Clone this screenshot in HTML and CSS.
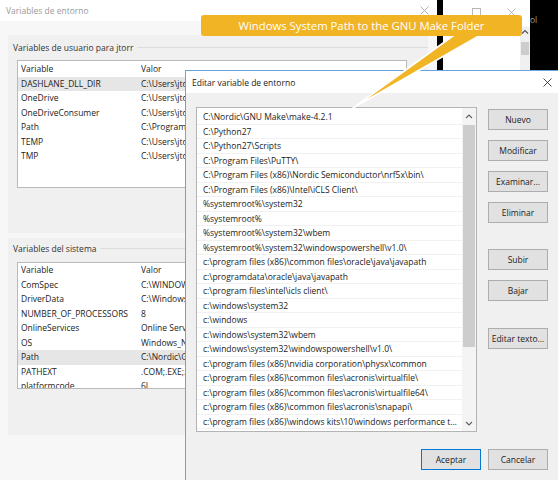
FILE: index.html
```html
<!DOCTYPE html>
<html lang="es">
<head>
<meta charset="utf-8">
<title>Variables de entorno</title>
<link rel="stylesheet" href="styles.css">
</head>
<body>
<div class="desk">

  <div class="bgwin">
    <div class="bg-title">
      <span>Variables de entorno</span>
      <svg class="x-ico" width="9" height="9" viewBox="0 0 9 9"><path d="M0.5 0.5L8.5 8.5M8.5 0.5L0.5 8.5" stroke="#b0b0b0" stroke-width="1" fill="none"/></svg>
    </div>
    <div class="bg-body">
      <section class="panel p1">
        <div class="glabel"><span>Variables de usuario para jtorr</span><i></i></div>
        <div class="vlist vl-user">
          <div class="vrow"><span>Variable</span><span>Valor</span></div>
          <div class="vrow sel"><span>DASHLANE_DLL_DIR</span><span>C:\Users\jtorr\AppData\Roaming\Dashlane\</span></div>
          <div class="vrow"><span>OneDrive</span><span>C:\Users\jtorr\OneDrive</span></div>
          <div class="vrow"><span>OneDriveConsumer</span><span>C:\Users\jtorr\OneDrive</span></div>
          <div class="vrow"><span>Path</span><span>C:\Program Files\</span></div>
          <div class="vrow"><span>TEMP</span><span>C:\Users\jtorr\AppData\Local\Temp</span></div>
          <div class="vrow"><span>TMP</span><span>C:\Users\jtorr\AppData\Local\Temp</span></div>
        </div>
      </section>
      <section class="panel p2">
        <div class="glabel"><span>Variables del sistema</span><i></i></div>
        <div class="vlist vl-sys">
          <div class="vrow"><span>Variable</span><span>Valor</span></div>
          <div class="vrow"><span>ComSpec</span><span>C:\WINDOWS\system32\cmd.exe</span></div>
          <div class="vrow"><span>DriverData</span><span>C:\Windows\System32\Drivers\DriverData</span></div>
          <div class="vrow"><span>NUMBER_OF_PROCESSORS</span><span>8</span></div>
          <div class="vrow"><span>OnlineServices</span><span>Online Services</span></div>
          <div class="vrow"><span>OS</span><span>Windows_NT</span></div>
          <div class="vrow sel"><span>Path</span><span>C:\Nordic\GNU Make\make-4.2.1;</span></div>
          <div class="vrow"><span>PATHEXT</span><span>.COM;.EXE;.BAT;.CMD</span></div>
          <div class="vrow"><span>platformcode</span><span>6L</span></div>
        </div>
      </section>
    </div>
  </div>

  <div class="blk">
    <div class="wwin">
      <div class="wtitle">
        <svg width="9" height="9" viewBox="0 0 9 9"><rect x="0.5" y="0.5" width="8" height="8" stroke="#b8b8b8" fill="none"/></svg>
        <svg width="9" height="9" viewBox="0 0 9 9"><path d="M0.5 0.5L8.5 8.5M8.5 0.5L0.5 8.5" stroke="#b8b8b8" fill="none"/></svg>
      </div>
      <div class="wbody">
        <div class="wsb">
          <svg width="10" height="10" viewBox="0 0 10 10"><path d="M2 6.5L5 3.5L8 6.5" stroke="#555" stroke-width="1.2" fill="none"/></svg>
          <div class="wthumb"></div>
        </div>
      </div>
    </div>
    <span class="ol">ol</span>
  </div>

  <div class="dlg">
    <div class="dlg-title">
      <span>Editar variable de entorno</span>
      <svg class="x-ico" width="9" height="9" viewBox="0 0 9 9"><path d="M0.5 0.5L8.5 8.5M8.5 0.5L0.5 8.5" stroke="#333" stroke-width="0.9" fill="none"/></svg>
    </div>
    <div class="dlg-body">
      <div class="plist">
        <div class="prows">
          <div class="prow">C:\Nordic\GNU Make\make-4.2.1</div>
          <div class="prow">C:\Python27</div>
          <div class="prow">C:\Python27\Scripts</div>
          <div class="prow">C:\Program Files\PuTTY\</div>
          <div class="prow">C:\Program Files (x86)\Nordic Semiconductor\nrf5x\bin\</div>
          <div class="prow">C:\Program Files (x86)\Intel\iCLS Client\</div>
          <div class="prow">%systemroot%\system32</div>
          <div class="prow">%systemroot%</div>
          <div class="prow">%systemroot%\system32\wbem</div>
          <div class="prow">%systemroot%\system32\windowspowershell\v1.0\</div>
          <div class="prow">c:\program files (x86)\common files\oracle\java\javapath</div>
          <div class="prow">c:\programdata\oracle\java\javapath</div>
          <div class="prow">c:\program files\intel\icls client\</div>
          <div class="prow">c:\windows\system32</div>
          <div class="prow">c:\windows</div>
          <div class="prow">c:\windows\system32\wbem</div>
          <div class="prow">c:\windows\system32\windowspowershell\v1.0\</div>
          <div class="prow">c:\program files (x86)\nvidia corporation\physx\common</div>
          <div class="prow">c:\program files (x86)\common files\acronis\virtualfile\</div>
          <div class="prow">c:\program files (x86)\common files\acronis\virtualfile64\</div>
          <div class="prow">c:\program files (x86)\common files\acronis\snapapi\</div>
          <div class="prow">c:\program files (x86)\windows kits\10\windows performance toolkit\</div>
        </div>
        <div class="psb">
          <div class="sb-arrow"><svg width="8" height="5" viewBox="0 0 8 5"><path d="M1 4L4 1L7 4" stroke="#606060" stroke-width="1.1" fill="none"/></svg></div>
          <div class="sb-thumb"></div>
          <div class="sb-space"></div>
          <div class="sb-arrow"><svg width="8" height="5" viewBox="0 0 8 5"><path d="M1 1L4 4L7 1" stroke="#606060" stroke-width="1.1" fill="none"/></svg></div>
        </div>
      </div>
      <div class="btncol">
        <div class="btn b-nuevo">Nuevo</div>
        <div class="btn">Modificar</div>
        <div class="btn">Examinar...</div>
        <div class="btn">Eliminar</div>
        <div class="btn b-subir">Subir</div>
        <div class="btn">Bajar</div>
        <div class="btn b-editar">Editar texto...</div>
      </div>
      <div class="footer">
        <div class="btn default">Aceptar</div>
        <div class="btn">Cancelar</div>
      </div>
    </div>
  </div>

  <svg class="pointer" width="558" height="480" viewBox="0 0 558 480">
    <polygon points="457,33 484,33 353,108" fill="#f1b424" stroke="#ffffff" stroke-width="1.6" stroke-linejoin="round"/>
  </svg>
  <div class="callout">Windows System Path to the GNU Make Folder</div>

</div>
</body>
</html>
```

FILE: styles.css
```css
* { box-sizing: border-box; }

html, body {
  margin: 0;
  padding: 0;
}

body {
  width: 558px;
  height: 480px;
  overflow: hidden;
  font-family: "Open Sans", "Noto Sans", sans-serif;
  font-size: 8.5px;
  color: #222;
}

.desk {
  position: relative;
  width: 558px;
  height: 480px;
  overflow: hidden;
  background: #f7f7f7;
}

/* background window */
.bgwin {
  position: absolute;
  left: 0;
  top: 0;
  width: 437px;
  height: 480px;
  background: #f7f7f7;
}

.bg-title {
  height: 21px;
  background: #fff;
  display: flex;
  align-items: center;
  padding: 0 8px 0 6px;
  color: #9a9a9a;
}

.x-ico { margin-left: auto; display: block; }

.bg-body {
  padding: 14px 9px 0 8px;
}

.panel {
  background: #f0f0f0;
  padding-left: 5px;
}

.p1 { padding-top: 5px; padding-bottom: 45px; }
.p2 { margin-top: 5px; padding-top: 3px; padding-bottom: 46px; }

.glabel {
  height: 14px;
  display: flex;
  align-items: center;
  gap: 4px;
  color: #333;
}

.glabel i {
  flex: 1;
  height: 1px;
  background: #dcdcdc;
}

.vlist {
  margin-left: 4px;
  width: 390px;
  background: #fff;
  border: 1px solid #b9b9b9;
  overflow: hidden;
}

.vl-user { margin-top: 6px; height: 128px; padding-top: 1px; }
.vl-sys { margin-top: 7px; height: 127px; }

.vrow {
  display: grid;
  grid-template-columns: 120px 1fr;
  height: 14.5px;
  line-height: 14.5px;
  padding-left: 3px;
  white-space: nowrap;
  overflow: hidden;
}

.vrow span { overflow: hidden; }
.vrow.sel { background: #e6e6e6; }

/* black area with small window */
.blk {
  position: absolute;
  left: 437px;
  top: 0;
  width: 121px;
  height: 70px;
  background: #000;
  display: flex;
  padding-left: 6px;
}

.wwin {
  width: 87px;
  height: 70px;
  background: #fff;
  display: flex;
  flex-direction: column;
}

.wtitle {
  height: 27px;
  display: flex;
  justify-content: flex-end;
  align-items: flex-start;
  gap: 26px;
  padding: 8px 14px 0 0;
}

.wtitle svg { display: block; }

.wbody {
  flex: 1;
  display: flex;
  justify-content: flex-end;
}

.wsb {
  width: 10px;
  background: #f0f0f0;
  display: flex;
  flex-direction: column;
}

.wsb svg { display: block; margin-top: 0; }

.wthumb {
  margin: 5px 1px 0;
  height: 13px;
  background: #cdcdcd;
}

.ol {
  color: #9a9a9a;
  margin-top: 14px;
  margin-left: 0;
  line-height: 12px;
}

/* front dialog */
.dlg {
  position: absolute;
  left: 185px;
  top: 70px;
  width: 380px;
  height: 420px;
  background: #f0f0f0;
  border-left: 1px solid #6aa2da;
  border-top: 1px solid #6aa2da;
  overflow: hidden;
}

.dlg-title {
  height: 22px;
  background: #fff;
  display: flex;
  align-items: center;
  padding: 0 13px 0 6px;
  color: #222;
}

.dlg-body {
  display: grid;
  grid-template-columns: 281px 60px;
  column-gap: 11px;
  padding: 14px 0 0 10px;
}

.plist {
  height: 325px;
  background: #fff;
  border: 1px solid #b4b4b4;
  display: flex;
}

.prows {
  flex: 1;
  min-width: 0;
  padding-top: 2px;
}

.prow {
  height: 14.5px;
  line-height: 14px;
  padding: 0 2px 0 6px;
  border-bottom: 1px solid #f1f1f1;
  white-space: nowrap;
  overflow: hidden;
  text-overflow: ellipsis;
}

.psb {
  width: 14px;
  background: #f4f4f4;
  display: flex;
  flex-direction: column;
}

.sb-arrow {
  height: 16px;
  display: flex;
  align-items: center;
  justify-content: center;
}

.sb-arrow svg { display: block; }

.sb-thumb {
  margin: 1px 1px 0;
  height: 222px;
  background: #cdcdcd;
}

.sb-space { flex: 1; }

.btncol {
  display: flex;
  flex-direction: column;
  gap: 10px;
  padding-top: 2px;
}

.btn {
  height: 21px;
  width: 60px;
  background: #e1e1e1;
  border: 1px solid #adadad;
  display: flex;
  align-items: center;
  justify-content: center;
  white-space: nowrap;
  color: #222;
}

.btncol .b-subir { margin-top: 16px; }
.btncol .b-editar { margin-top: 17px; }

.btn.default { border-color: #0078d7; }

.footer {
  grid-column: 1 / -1;
  display: flex;
  justify-content: flex-end;
  gap: 7px;
  margin-top: 17px;
}

/* annotation */
.pointer {
  position: absolute;
  left: 0;
  top: 0;
  pointer-events: none;
}

.callout {
  position: absolute;
  left: 201px;
  top: 15px;
  width: 321px;
  height: 21px;
  background: #f1b424;
  border-radius: 3px;
  color: #fff;
  font-size: 11.3px;
  line-height: 21px;
  text-align: center;
  white-space: nowrap;
}
```
